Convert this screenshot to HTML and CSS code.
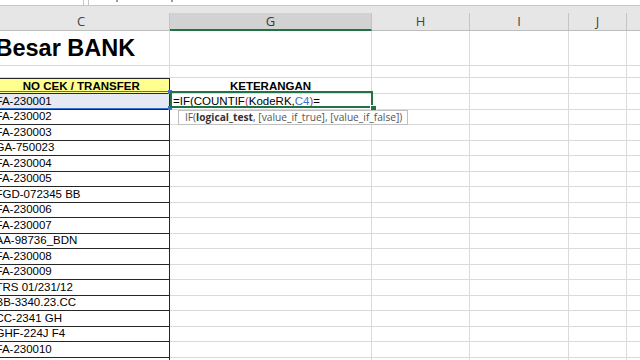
FILE: index.html
```html
<!DOCTYPE html>
<html lang="en">
    <head>
        <meta charset="UTF-8" />
        <title>Buku Besar BANK</title>
        <link rel="stylesheet" href="styles.css">
    </head>
    <body>
        <div class="app">
            <!-- formula bar, only its bottom edge is visible -->
            <div class="formula-bar">
                <span class="name-box"></span>
                <span class="fx-mark m1"></span>
                <span class="fx-mark m2"></span>
                <span class="formula-input"></span>
            </div>

            <div class="col-headers">
                <div class="col-head">C</div>
                <div class="col-head selected">G</div>
                <div class="col-head">H</div>
                <div class="col-head">I</div>
                <div class="col-head">J</div>
                <div class="col-head"></div>
            </div>

            <div class="sheet">
                <div class="row title-row">
                    <div class="cell c title">Besar BANK</div>
                    <div class="cell"></div><div class="cell"></div><div class="cell"></div><div class="cell"></div><div class="cell"></div>
                </div>
                <div class="row blank-row">
                    <div class="cell c"></div>
                    <div class="cell"></div><div class="cell"></div><div class="cell"></div><div class="cell"></div><div class="cell"></div>
                </div>
                <div class="row head-row">
                    <div class="cell c th yellow">NO CEK / TRANSFER</div>
                    <div class="cell th">KETERANGAN</div>
                    <div class="cell"></div><div class="cell"></div><div class="cell"></div><div class="cell"></div>
                </div>
                <div class="row">
                    <div class="cell c bordered picked">FA-230001</div>
                    <div class="cell formula">=IF(COUNTIF<span class="paren">(</span>KodeRK,<span class="ref">C4</span><span class="paren">)</span>=</div>
                    <div class="cell"></div><div class="cell"></div><div class="cell"></div><div class="cell"></div>
                </div>
                <div class="row"><div class="cell c bordered">FA-230002</div><div class="cell"></div><div class="cell"></div><div class="cell"></div><div class="cell"></div><div class="cell"></div></div>
                <div class="row"><div class="cell c bordered">FA-230003</div><div class="cell"></div><div class="cell"></div><div class="cell"></div><div class="cell"></div><div class="cell"></div></div>
                <div class="row"><div class="cell c bordered">GA-750023</div><div class="cell"></div><div class="cell"></div><div class="cell"></div><div class="cell"></div><div class="cell"></div></div>
                <div class="row"><div class="cell c bordered">FA-230004</div><div class="cell"></div><div class="cell"></div><div class="cell"></div><div class="cell"></div><div class="cell"></div></div>
                <div class="row"><div class="cell c bordered">FA-230005</div><div class="cell"></div><div class="cell"></div><div class="cell"></div><div class="cell"></div><div class="cell"></div></div>
                <div class="row"><div class="cell c bordered">FGD-072345 BB</div><div class="cell"></div><div class="cell"></div><div class="cell"></div><div class="cell"></div><div class="cell"></div></div>
                <div class="row"><div class="cell c bordered">FA-230006</div><div class="cell"></div><div class="cell"></div><div class="cell"></div><div class="cell"></div><div class="cell"></div></div>
                <div class="row"><div class="cell c bordered">FA-230007</div><div class="cell"></div><div class="cell"></div><div class="cell"></div><div class="cell"></div><div class="cell"></div></div>
                <div class="row"><div class="cell c bordered">AA-98736_BDN</div><div class="cell"></div><div class="cell"></div><div class="cell"></div><div class="cell"></div><div class="cell"></div></div>
                <div class="row"><div class="cell c bordered">FA-230008</div><div class="cell"></div><div class="cell"></div><div class="cell"></div><div class="cell"></div><div class="cell"></div></div>
                <div class="row"><div class="cell c bordered">FA-230009</div><div class="cell"></div><div class="cell"></div><div class="cell"></div><div class="cell"></div><div class="cell"></div></div>
                <div class="row"><div class="cell c bordered">TRS 01/231/12</div><div class="cell"></div><div class="cell"></div><div class="cell"></div><div class="cell"></div><div class="cell"></div></div>
                <div class="row"><div class="cell c bordered">BB-3340.23.CC</div><div class="cell"></div><div class="cell"></div><div class="cell"></div><div class="cell"></div><div class="cell"></div></div>
                <div class="row"><div class="cell c bordered">CC-2341 GH</div><div class="cell"></div><div class="cell"></div><div class="cell"></div><div class="cell"></div><div class="cell"></div></div>
                <div class="row"><div class="cell c bordered">GHF-224J F4</div><div class="cell"></div><div class="cell"></div><div class="cell"></div><div class="cell"></div><div class="cell"></div></div>
                <div class="row"><div class="cell c bordered">FA-230010</div><div class="cell"></div><div class="cell"></div><div class="cell"></div><div class="cell"></div><div class="cell"></div></div>
                <div class="row"><div class="cell c bordered">WW-31/08/110</div><div class="cell"></div><div class="cell"></div><div class="cell"></div><div class="cell"></div><div class="cell"></div></div>
            </div>

            <!-- selection overlays -->
            <div class="ref-box"></div>
            <span class="ref-handle h-top"></span>
            <span class="ref-handle h-bottom"></span>
            <div class="active-cell"></div>
            <span class="fill-handle"></span>

            <div class="tooltip">IF(<b>logical_test</b>, [value_if_true], [value_if_false])</div>
        </div>
    </body>
</html>
```

FILE: styles.css
```css
body {
    margin: 0;
    padding: 0;
    background-color: #fff;
    font-family: "Liberation Sans", Arial, sans-serif;
    color: #000;
    overflow: hidden;
}

.app {
    position: relative;
    width: 640px;
    height: 360px;
    overflow: hidden;
}

/* ---------- formula bar ---------- */
.formula-bar {
    position: relative;
    height: 5px;
    background-color: #fff;
    border-bottom: 1px solid #c6c6c6;
}

.name-box {
    position: absolute;
    left: 83px;
    top: 0;
    width: 4px;
    height: 5px;
    border-left: 1px solid #c6c6c6;
    border-right: 1px solid #c6c6c6;
}

.fx-mark {
    position: absolute;
    top: 0;
    width: 2px;
    height: 2px;
    background-color: #9a9a9a;
}

.m1 { left: 116px; }
.m2 { left: 171px; }

.formula-input {
    position: absolute;
    left: 88px;
    right: 0;
    top: 0;
    height: 5px;
}

/* ---------- column headers ---------- */
.col-headers {
    display: grid;
    grid-template-columns: 177px 202px 98px 99px 58px 40px;
    margin-left: -7px;
    padding-top: 7px;
    background-color: #e6e6e6;
}

.col-head {
    height: 17px;
    line-height: 17px;
    text-align: center;
    font-family: "Open Sans", "Liberation Sans", sans-serif;
    font-size: 13px;
    color: #444;
    border-right: 1px solid #c4c4c4;
    border-bottom: 1px solid #bdbdbd;
}

.col-head.selected {
    background-color: #d2d2d2;
    border-bottom: 2px solid #217346;
    height: 16px;
    color: #3a3a3a;
}

/* ---------- grid ---------- */
.sheet {
    margin-left: -7px;
}

.row {
    display: grid;
    grid-template-columns: 177px 202px 98px 99px 58px 40px;
    height: 15.5px;
}

.title-row { height: 31px; }
.blank-row { height: 15.5px; }
.head-row { height: 16px; }

.cell {
    box-sizing: border-box;
    border-right: 1px solid #dadada;
    border-bottom: 1px solid #dadada;
    font-size: 11.5px;
    line-height: 15px;
    padding: 0 2px;
    white-space: nowrap;
    overflow: hidden;
}

.cell.c {
    padding-left: 2.5px;
    overflow: visible;
}

.title {
    font-size: 23.5px;
    font-weight: bold;
    line-height: 34px;
}

.th {
    font-weight: bold;
    text-align: center;
    line-height: 16px;
}

.yellow {
    background-color: #ffff8f;
    border-top: 1px solid #262626;
    border-right: 1px solid #262626;
    border-bottom: 1px solid #262626;
    line-height: 14px;
}

.bordered {
    border-right: 1px solid #262626;
    border-bottom: 1px solid #262626;
}

.picked {
    background-color: #e4e9f4;
}

.formula {
    padding-left: 3px;
    overflow: visible;
    border-right: none;
}

.paren { color: #b03a3a; }
.ref { color: #3b6fd0; }

/* ---------- overlays ---------- */
.ref-box {
    position: absolute;
    left: -4px;
    top: 91px;
    width: 174px;
    height: 16px;
    border: 1px solid #3b6fd0;
}

.ref-handle {
    position: absolute;
    left: 168px;
    width: 4px;
    height: 4px;
    background-color: #3b6fd0;
}

.h-top { top: 90px; }
.h-bottom { top: 106px; }

.active-cell {
    position: absolute;
    left: 170px;
    top: 91px;
    width: 203px;
    height: 17px;
    box-sizing: border-box;
    border: 2px solid #217346;
}

.fill-handle {
    position: absolute;
    left: 370px;
    top: 105px;
    width: 5px;
    height: 5px;
    background-color: #217346;
    border: 1px solid #fff;
}

.tooltip {
    position: absolute;
    left: 178px;
    top: 110px;
    height: 15px;
    padding: 0 5px 0 6px;
    box-sizing: border-box;
    background-color: #fff;
    border: 1px solid #bfbfbf;
    font-family: "Open Sans", "Liberation Sans", sans-serif;
    font-size: 10.2px;
    line-height: 13px;
    color: #555;
    white-space: nowrap;
}

.tooltip b {
    color: #333;
}
```
